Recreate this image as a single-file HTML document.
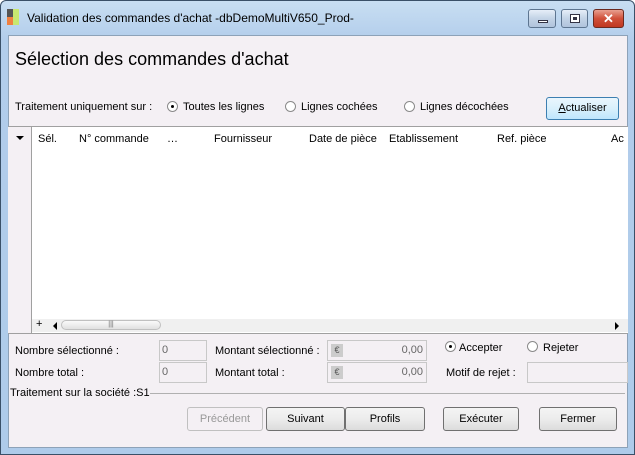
<!DOCTYPE html>
<html><head><meta charset="utf-8"><style>
*{box-sizing:border-box;margin:0;padding:0}
body{width:635px;height:455px;overflow:hidden;font-family:"Liberation Sans",sans-serif;font-size:11px;color:#000;background:#fff}
.win{position:absolute;left:0;top:0;width:635px;height:455px;background:linear-gradient(#c8def2,#b2cdeb 40px,#aecbea);border:1px solid #3a5068;border-radius:6px 6px 0 0}
.client{position:absolute;left:8px;top:35px;width:620px;height:413px;background:#f4f0f4;border:1px solid #8da2b8}
.abs{position:absolute;white-space:nowrap}
.tbtn{position:absolute;top:9px;height:19px;border:1px solid #5d7590;border-radius:3px;background:linear-gradient(#e6eef8,#c3d3e6 50%,#b0c4dc)}
.btn{position:absolute;top:407px;height:24px;border:1px solid #707070;border-radius:3px;background:linear-gradient(#f4f4f4,#ececec 50%,#dcdcdc);text-align:center;line-height:22px;font-size:11px}
.radio{position:absolute;width:11px;height:11px;border-radius:50%;border:1px solid #8a8a8a;background:#fff}
.radio.on::after{content:"";position:absolute;left:3px;top:3px;width:3px;height:3px;border-radius:50%;background:#000}
.field{position:absolute;height:21px;border:1px solid #c8c8c8;background:#f4f0f4;font-size:11px;color:#666}
</style></head><body>
<div class="win"></div>
<div class="abs" style="left:7px;top:9px;width:6px;height:16px;background:#555"></div>
<div class="abs" style="left:7px;top:17px;width:6px;height:8px;background:#f08040"></div>
<div class="abs" style="left:13px;top:9px;width:6px;height:16px;background:#c8e870"></div>
<div class="abs" style="left:27px;top:11px;font-size:12px;color:#000">Validation des commandes d'achat -dbDemoMultiV650_Prod-</div>
<div class="tbtn" style="left:528px;width:28px"><div class="abs" style="left:9px;top:10px;width:10px;height:3px;background:#fff;border:1px solid #334"></div></div>
<div class="tbtn" style="left:561px;width:27px"><div class="abs" style="left:8px;top:4px;width:10px;height:9px;border:1px solid #334;background:#fff"><div class="abs" style="left:2px;top:2px;width:4px;height:3px;background:#334"></div></div></div>
<div class="tbtn" style="left:593px;width:31px;background:linear-gradient(#e8a090,#d0503a 50%,#c03820);border-color:#6b2a20;color:#fff;font-weight:bold;font-size:13px;text-align:center;line-height:17px">✕</div>
<div class="client"></div>
<div class="abs" style="left:15px;top:49px;font-size:18px">Sélection des commandes d'achat</div>
<div class="abs" style="left:15px;top:101px">Traitement uniquement sur :</div>
<div class="radio on" style="left:167px;top:101px"></div><div class="abs" style="left:183px;top:101px">Toutes les lignes</div>
<div class="radio" style="left:285px;top:101px"></div><div class="abs" style="left:301px;top:101px">Lignes cochées</div>
<div class="radio" style="left:404px;top:101px"></div><div class="abs" style="left:420px;top:101px">Lignes décochées</div>
<div class="abs" style="left:546px;top:97px;width:73px;height:23px;border:1px solid #3c7fb1;border-radius:3px;background:linear-gradient(#eaf6fd,#d9f0fc 50%,#bee6fd);text-align:center;line-height:21px"><span style="text-decoration:underline">A</span>ctualiser</div>
<div class="abs" style="left:8px;top:126px;width:620px;height:208px;background:#fff;border-top:1px solid #a0a0a0;border-bottom:1px solid #a0a0a0"></div>
<div class="abs" style="left:8px;top:127px;width:24px;height:206px;background:#f4f0f4;border-right:1px solid #a0a0a0"></div>
<div class="abs" style="left:16px;top:136px;width:0;height:0;border-left:4px solid transparent;border-right:4px solid transparent;border-top:4px solid #000"></div>
<div class="abs" style="left:38px;top:133px">Sél.</div>
<div class="abs" style="left:79px;top:133px">N° commande</div>
<div class="abs" style="left:167px;top:133px">…</div>
<div class="abs" style="left:214px;top:133px">Fournisseur</div>
<div class="abs" style="left:309px;top:133px">Date de pièce</div>
<div class="abs" style="left:389px;top:133px">Etablissement</div>
<div class="abs" style="left:497px;top:133px">Ref. pièce</div>
<div class="abs" style="left:611px;top:133px">Ac</div>
<div class="abs" style="left:32px;top:319px;width:596px;height:13px;background:#f0f0f0"></div>
<div class="abs" style="left:36px;top:318px;font-size:11px">+</div>
<div class="abs" style="left:53px;top:322px;border-top:4px solid transparent;border-bottom:4px solid transparent;border-right:4px solid #000"></div>
<div class="abs" style="left:61px;top:320px;width:100px;height:10px;border:1px solid #c0c0c0;border-radius:5px;background:linear-gradient(#fafafa,#e0e0e0);font-size:7px;text-align:center;line-height:8px;color:#666">|||</div>
<div class="abs" style="left:615px;top:322px;border-top:4px solid transparent;border-bottom:4px solid transparent;border-left:4px solid #000"></div>
<div class="abs" style="left:15px;top:345px">Nombre sélectionné :</div>
<div class="field" style="left:159px;top:340px;width:48px;padding:3px 2px">0</div>
<div class="abs" style="left:215px;top:345px">Montant sélectionné :</div>
<div class="field" style="left:327px;top:340px;width:100px;text-align:right;padding:3px 3px">0,00</div>
<div class="abs" style="left:331px;top:344px;width:12px;height:13px;background:#ccc;font-size:9px;color:#555;text-align:center;line-height:13px">€</div>
<div class="radio on" style="left:445px;top:341px"></div><div class="abs" style="left:459px;top:342px">Accepter</div>
<div class="radio" style="left:527px;top:341px"></div><div class="abs" style="left:543px;top:342px">Rejeter</div>
<div class="abs" style="left:15px;top:367px">Nombre total :</div>
<div class="field" style="left:159px;top:362px;width:48px;padding:3px 2px">0</div>
<div class="abs" style="left:215px;top:367px">Montant total :</div>
<div class="field" style="left:327px;top:362px;width:100px;text-align:right;padding:3px 3px">0,00</div>
<div class="abs" style="left:331px;top:366px;width:12px;height:13px;background:#ccc;font-size:9px;color:#555;text-align:center;line-height:13px">€</div>
<div class="abs" style="left:446px;top:367px">Motif de rejet :</div>
<div class="field" style="left:527px;top:362px;width:101px;background:#f4f0f4"></div>
<div class="abs" style="left:10px;top:387px">Traitement sur la société :S1</div>
<div class="abs" style="left:150px;top:393px;width:475px;height:1px;background:#b0b0b0"></div>
<div class="btn" style="left:187px;width:76px;color:#999;border-color:#c0c0c0;background:#f4f0f4">Précédent</div>
<div class="btn" style="left:266px;width:79px">Suivant</div>
<div class="btn" style="left:345px;width:80px">Profils</div>
<div class="btn" style="left:443px;width:76px">Exécuter</div>
<div class="btn" style="left:539px;width:78px">Fermer</div>
</body></html>
